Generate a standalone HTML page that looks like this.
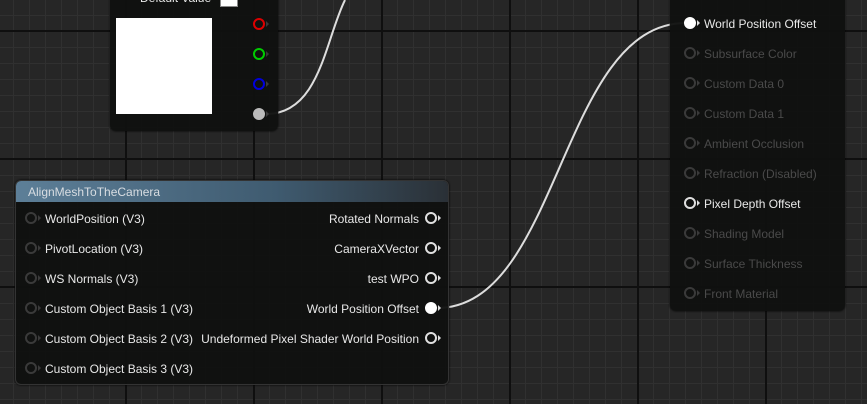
<!DOCTYPE html>
<html><head><style>
body{margin:0;width:867px;height:404px;overflow:hidden;position:relative;font-family:"Liberation Sans",sans-serif;
background-color:#262626;
background-image:
linear-gradient(90deg,#0f0f0f 2px,transparent 2px),
linear-gradient(0deg,#0f0f0f 2px,transparent 2px),
linear-gradient(90deg,#303030 1px,transparent 1px),
linear-gradient(0deg,#303030 1px,transparent 1px);
background-size:128px 128px,128px 128px,16px 16px,16px 16px;
background-position:125px 0,0 32px,13px 0,0 0;}
.node{position:absolute;background:rgba(16,17,16,0.96);border-radius:6px;box-shadow:0 0 2px #000;}
.t{position:absolute;font-size:12px;color:#e8e8e8;white-space:nowrap;line-height:14px;margin-top:1px}
.d{color:#4a4a4a}
.pin{position:absolute;width:8px;height:8px;border:2px solid #3a3a3a;border-radius:50%;}
.pin:after{content:"";position:absolute;left:11px;top:1px;border-left:3px solid #3a3a3a;border-top:3px solid transparent;border-bottom:3px solid transparent}
.w{border-color:#e0e0e0}.w:after{border-left-color:#e0e0e0}
.f{background:#fff;border-color:#fff}
</style></head><body>
<svg style="position:absolute;left:0;top:0" width="867" height="404">
<path d="M266 114 C320 114,325 40,345 0" stroke="#ddd" stroke-width="2" fill="none"/>
<path d="M437 308 C560 308,560 23,686 23" stroke="#ddd" stroke-width="2" fill="none"/>
</svg>
<div class="node" style="left:110px;top:-10px;width:168px;height:141px"></div>
<div style="position:absolute;left:220px;top:-10px;width:16px;height:15px;background:#fff;border:1px solid #888"></div>
<div class="t" style="left:140px;top:-10px">Default Value</div>
<div style="position:absolute;left:116px;top:18px;width:96px;height:96px;background:#fff"></div>
<div class="pin" style="left:253px;top:18px;border-color:#d00"></div>
<div class="pin" style="left:253px;top:48px;border-color:#0c0"></div>
<div class="pin" style="left:253px;top:78px;border-color:#00d"></div>
<div class="pin" style="left:253px;top:108px;background:#bbb;border-color:#bbb"></div>

<div class="node" style="left:15px;top:180px;width:434px;height:205px;border:1px solid #333;box-sizing:border-box">
<div style="height:21px;border-radius:5px 5px 0 0;background:linear-gradient(90deg,#5d7f98,#3f5b70 60%,#2a3036)"></div></div>
<div class="t" style="left:28px;top:184px;color:#d8dde2">AlignMeshToTheCamera</div>
<div class="pin" style="left:25px;top:212px"></div><div class="t" style="left:45px;top:211px">WorldPosition (V3)</div>
<div class="pin" style="left:25px;top:242px"></div><div class="t" style="left:45px;top:241px">PivotLocation (V3)</div>
<div class="pin" style="left:25px;top:272px"></div><div class="t" style="left:45px;top:271px">WS Normals (V3)</div>
<div class="pin" style="left:25px;top:302px"></div><div class="t" style="left:45px;top:301px">Custom Object Basis 1 (V3)</div>
<div class="pin" style="left:25px;top:332px"></div><div class="t" style="left:45px;top:331px">Custom Object Basis 2 (V3)</div>
<div class="pin" style="left:25px;top:362px"></div><div class="t" style="left:45px;top:361px">Custom Object Basis 3 (V3)</div>
<div class="t" style="right:448px;top:211px">Rotated Normals</div><div class="pin w" style="left:425px;top:212px"></div>
<div class="t" style="right:448px;top:241px">CameraXVector</div><div class="pin w" style="left:425px;top:242px"></div>
<div class="t" style="right:448px;top:271px">test WPO</div><div class="pin w" style="left:425px;top:272px"></div>
<div class="t" style="right:448px;top:301px">World Position Offset</div><div class="pin w f" style="left:425px;top:302px"></div>
<div class="t" style="right:448px;top:331px">Undeformed Pixel Shader World Position</div><div class="pin w" style="left:425px;top:332px"></div>

<div class="node" style="left:670px;top:-10px;width:175px;height:321px"></div>
<div class="pin w f" style="left:684px;top:17px"></div><div class="t" style="left:704px;top:16px">World Position Offset</div>
<div class="pin" style="left:684px;top:47px"></div><div class="t d" style="left:704px;top:46px">Subsurface Color</div>
<div class="pin" style="left:684px;top:77px"></div><div class="t d" style="left:704px;top:76px">Custom Data 0</div>
<div class="pin" style="left:684px;top:107px"></div><div class="t d" style="left:704px;top:106px">Custom Data 1</div>
<div class="pin" style="left:684px;top:137px"></div><div class="t d" style="left:704px;top:136px">Ambient Occlusion</div>
<div class="pin" style="left:684px;top:167px"></div><div class="t d" style="left:704px;top:166px">Refraction (Disabled)</div>
<div class="pin w" style="left:684px;top:197px"></div><div class="t" style="left:704px;top:196px">Pixel Depth Offset</div>
<div class="pin" style="left:684px;top:227px"></div><div class="t d" style="left:704px;top:226px">Shading Model</div>
<div class="pin" style="left:684px;top:257px"></div><div class="t d" style="left:704px;top:256px">Surface Thickness</div>
<div class="pin" style="left:684px;top:287px"></div><div class="t d" style="left:704px;top:286px">Front Material</div>
</body></html>
